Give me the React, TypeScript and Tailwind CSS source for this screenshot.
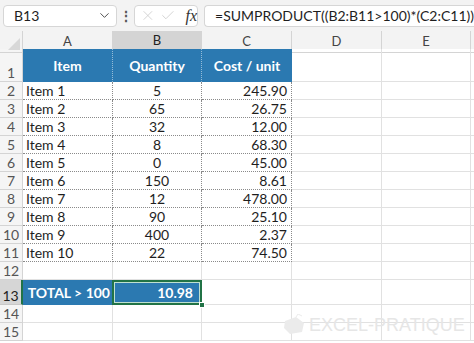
import { ChevronDown, X, Check } from 'lucide-react'

const rows = [
  ['Item 1', '5', '245.90'],
  ['Item 2', '65', '26.75'],
  ['Item 3', '32', '12.00'],
  ['Item 4', '8', '68.30'],
  ['Item 5', '0', '45.00'],
  ['Item 6', '150', '8.61'],
  ['Item 7', '12', '478.00'],
  ['Item 8', '90', '25.10'],
  ['Item 9', '400', '2.37'],
  ['Item 10', '22', '74.50'],
]

const grid = 'grid grid-cols-[23px_90px_89px_90px_90px_89px_1fr]'

function RowHead({ n, active = false }: { n: number; active?: boolean }) {
  return (
    <div
      className={`flex items-end justify-center pb-px border-b border-r text-[14px] leading-none ${
        active ? 'bg-[#d6d6d6] border-r-2 border-r-[#217346] border-b-[#c8c8c8] text-[#222]' : 'bg-[#f5f5f5] border-[#d4d4d4] text-[#555]'
      }`}
    >
      {n}
    </div>
  )
}

function Empty() {
  return <div className="border-r border-b border-[#e1e1e1]" />
}

export default function App() {
  return (
    <div className="w-[474px] h-[343px] overflow-hidden bg-white font-['Lato',sans-serif] text-[#1e1e1e] relative">
      {/* Formula bar */}
      <div className="h-[31px] bg-[#f3f3f3] flex items-center gap-0 pl-[3px]">
        <div className="w-[133px] h-[22px] bg-white border border-[#d6d6d6] rounded-[4px] flex items-center justify-between pl-[10px] pr-[4px] text-[14px]">
          <span>B13</span>
          <ChevronDown size={15} strokeWidth={1.5} className="text-[#444]" />
        </div>
        <div className="w-[20px] flex justify-center text-[#555] text-[14px] font-bold leading-none">⋮</div>
        <div className="w-[64px] h-[22px] bg-white border border-[#d6d6d6] rounded-[4px] flex items-center gap-[4px] pl-[5px]">
          <X size={17} strokeWidth={1.2} className="text-[#c8c8c8]" />
          <Check size={17} strokeWidth={1.2} className="text-[#c8c8c8]" />
          <span className="ml-[6px] font-['Liberation_Serif',serif] italic text-[16px] text-[#333]">fx</span>
        </div>
        <div className="ml-[6px] flex-1 h-[22px] bg-white border border-r-0 border-[#d6d6d6] rounded-l-[4px] flex items-center pl-[10px] text-[14px] whitespace-nowrap">
          =SUMPRODUCT((B2:B11&gt;100)*(C2:C11))
        </div>
      </div>

      {/* Column headers */}
      <div className={`${grid} h-[18px] bg-[#f3f3f3] text-[13px] text-[#444]`}>
        <div className="relative border-r border-b border-[#d4d4d4]">
          <div className="absolute right-[2px] bottom-[2px] w-0 h-0 border-l-[12px] border-l-transparent border-b-[12px] border-b-[#d8d8d8]" />
        </div>
        {['A', 'B', 'C', 'D', 'E'].map((c) => (
          <div
            key={c}
            className={`flex items-center justify-center border-r border-[#d4d4d4] ${
              c === 'B' ? 'bg-[#d4d4d4] border-b-2 border-b-[#217346] text-[#222]' : 'border-b'
            }`}
          >
            {c}
          </div>
        ))}
        <div className="border-b border-[#d4d4d4]" />
      </div>

      {/* Row 1 */}
      <div className={`${grid} h-[33px]`}>
        <RowHead n={1} />
        <div className="bg-[#2b79b1] text-white font-bold text-[14px] flex items-center justify-center border-r border-dotted border-white/50">Item</div>
        <div className="bg-[#2b79b1] text-white font-bold text-[14px] flex items-center justify-center border-r border-dotted border-white/50">Quantity</div>
        <div className="bg-[#2b79b1] text-white font-bold text-[14px] flex items-center justify-center">Cost / unit</div>
        <Empty />
        <Empty />
        <div className="border-b border-[#e1e1e1]" />
      </div>

      {/* Data rows */}
      {rows.map((r, i) => (
        <div key={i} className={`${grid} h-[18px] text-[14px] leading-none`}>
          <RowHead n={i + 2} />
          <div className="flex items-center pl-[3px] border-b border-r border-dotted border-[#8a8a8a]">{r[0]}</div>
          <div className="flex items-center justify-center border-b border-r border-dotted border-[#8a8a8a]">{r[1]}</div>
          <div className="flex items-center justify-end pr-[4px] border-b border-r border-dotted border-[#8a8a8a]">{r[2]}</div>
          <Empty />
          <Empty />
          <div className="border-b border-[#e1e1e1]" />
        </div>
      ))}

      {/* Row 12 */}
      <div className={`${grid} h-[18px]`}>
        <RowHead n={12} />
        <Empty />
        <Empty />
        <Empty />
        <Empty />
        <Empty />
        <div className="border-b border-[#e1e1e1]" />
      </div>

      {/* Row 13 */}
      <div className={`${grid} h-[25px] text-[14px]`}>
        <RowHead n={13} active />
        <div className="bg-[#2b79b1] text-white font-bold flex items-center justify-end pr-[3px]">TOTAL &gt; 100</div>
        <div className="relative bg-[#2b79b1] text-white font-bold flex items-center justify-end pr-[7px] border-2 border-[#217346] -ml-px">
          <div className="absolute inset-0 border border-[#bfe0d0]" />
          <span className="relative">10.98</span>
          <div className="absolute -right-[5px] -bottom-[5px] w-[6px] h-[6px] bg-[#217346] border border-white" />
        </div>
        <Empty />
        <Empty />
        <Empty />
        <div className="border-b border-[#e1e1e1]" />
      </div>

      {[14, 15].map((n) => (
        <div key={n} className={`${grid} h-[18px]`}>
          <RowHead n={n} />
          <Empty />
          <Empty />
          <Empty />
          <Empty />
          <Empty />
          <div className="border-b border-[#e1e1e1]" />
        </div>
      ))}

      {/* Watermark */}
      <div className="absolute left-[282px] top-[314px] flex items-center gap-[3px] pointer-events-none whitespace-nowrap">
        <svg width="24" height="22" viewBox="0 0 24 22">
          <path d="M3 7 L14 3 L22 9 L20 18 L8 20 L2 14 Z" fill="#ebebeb" />
          <path d="M14 3 L16 0 L20 2" stroke="#ebebeb" fill="none" />
        </svg>
        <span className="text-[#e6e6e6] text-[18px] font-['Liberation_Sans',sans-serif] leading-none">EXCEL-PRATIQUE</span>
      </div>
    </div>
  )
}
